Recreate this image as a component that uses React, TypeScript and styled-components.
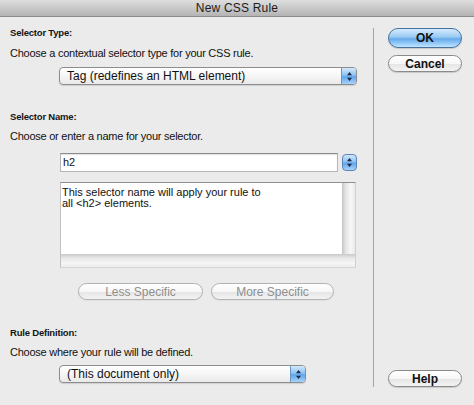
import React from "react";
import styled, { createGlobalStyle, css } from "styled-components";

const GlobalStyle = createGlobalStyle`
  html, body { margin: 0; padding: 0; background: #ebebeb; }
  * { box-sizing: border-box; }
  body { font-family: "Liberation Sans", Arial, sans-serif; color: #111; }
`;

const Window = styled.div`
  width: 474px;
  height: 405px;
  background: #ebebeb;
  display: flex;
  flex-direction: column;
  overflow: hidden;
`;

const TitleBar = styled.div`
  height: 17px;
  flex: none;
  display: flex;
  align-items: center;
  justify-content: center;
  background: linear-gradient(#dedede, #b4b4b4);
  border-bottom: 1px solid #8c8c8c;
  font-size: 12px;
  color: #1c1c1c;
  letter-spacing: 0.2px;
`;

const Body = styled.div`
  flex: 1;
  display: flex;
  min-height: 0;
`;

const LeftPane = styled.div`
  flex: 1;
  padding: 10px 0 0 10px;
  display: flex;
  flex-direction: column;
  align-items: flex-start;
`;

const Label = styled.div<{ $mt?: number }>`
  margin-top: ${(p) => p.$mt ?? 0}px;
  font-size: 9.5px;
  font-weight: bold;
  line-height: 12px;
  color: #151515;
  letter-spacing: -0.2px;
`;

const Hint = styled.div<{ $mt?: number }>`
  margin-top: ${(p) => p.$mt ?? 0}px;
  font-size: 11px;
  line-height: 14px;
  color: #111;
  letter-spacing: -0.25px;
`;

const Select = styled.div<{ $mt: number; $w: number }>`
  margin-top: ${(p) => p.$mt}px;
  margin-left: 49px;
  width: ${(p) => p.$w}px;
  height: 18px;
  border: 1px solid #8d8d8d;
  border-radius: 4px;
  background: linear-gradient(#ffffff, #f6f6f6 50%, #e9e9e9);
  box-shadow: 0 1px 1px rgba(0, 0, 0, 0.12);
  display: flex;
  align-items: center;
  overflow: hidden;
`;

const SelectText = styled.span`
  flex: 1;
  padding-left: 7px;
  font-size: 12px;
  color: #111;
`;

const aqua = css`
  background: linear-gradient(#d2e8fc, #8ec2f2 45%, #5ea5ea 55%, #a8d3fa);
`;

const SelectArrow = styled.div`
  width: 15px;
  height: 100%;
  ${aqua};
  border-left: 1px solid #6c94c4;
  display: flex;
  align-items: center;
  justify-content: center;
`;

const InputRow = styled.div`
  margin-top: 10px;
  margin-left: 50px;
  display: flex;
  align-items: center;
  gap: 4px;
`;

const TextInput = styled.div`
  width: 278px;
  height: 19px;
  background: #fff;
  border: 1px solid #b5b5b5;
  border-top-color: #8a8a8a;
  box-shadow: inset 0 1px 1px rgba(0, 0, 0, 0.12);
  font-size: 11px;
  line-height: 17px;
  padding-left: 2px;
  color: #111;
`;

const Stepper = styled.div`
  width: 15px;
  height: 17px;
  border-radius: 4px;
  border: 1px solid #5b84b8;
  ${aqua};
  display: flex;
  align-items: center;
  justify-content: center;
`;

const TextArea = styled.div`
  margin-top: 10px;
  margin-left: 50px;
  width: 296px;
  height: 86px;
  border-top: 1px solid #8f8f8f;
  border-left: 1px solid #c2c2c2;
  border-right: 1px solid #d0d0d0;
  border-bottom: 1px solid #d6d6d6;
  display: grid;
  grid-template-columns: 1fr 13px;
  grid-template-rows: 1fr 13px;
  background: #fff;
`;

const AreaContent = styled.div`
  padding: 4px 0 0 1px;
  font-size: 11px;
  line-height: 11px;
  color: #111;
  background: #fff;
`;

const VTrack = styled.div`
  background: linear-gradient(90deg, #c6c6c6, #e6e6e6 4px, #f7f7f7 9px, #e8e8e8);
`;

const HTrack = styled.div`
  grid-column: 1 / span 2;
  background: linear-gradient(#c9c9c9, #e8e8e8 4px, #f5f5f5 9px, #ededed);
`;

const ButtonRow = styled.div`
  margin-top: 15px;
  margin-left: 68px;
  display: flex;
  gap: 8px;
`;

const Pill = styled.div<{ $w: number; $h?: number; $disabled?: boolean; $primary?: boolean }>`
  width: ${(p) => p.$w}px;
  height: ${(p) => p.$h ?? 17}px;
  border-radius: 10px;
  display: flex;
  align-items: center;
  justify-content: center;
  font-size: 12px;
  border: 1px solid ${(p) => (p.$disabled ? "#b2b2b2" : p.$primary ? "#47729f" : "#8a8a8a")};
  color: ${(p) => (p.$disabled ? "#8f8f8f" : "#111")};
  font-weight: ${(p) => (p.$disabled ? "normal" : "bold")};
  background: ${(p) =>
    p.$primary
      ? "linear-gradient(#d6ebfd, #98c9f3 45%, #66aaea 55%, #9fd1fb 85%, #c4e4fd)"
      : "linear-gradient(#ffffff, #f7f7f7 50%, #e6e6e6 55%, #f3f3f3)"};
  box-shadow: 0 1px 1px rgba(0, 0, 0, ${(p) => (p.$disabled ? 0.05 : 0.15)});
`;

const RightPane = styled.div`
  width: 101px;
  flex: none;
  margin: 11px 0 18px;
  border-left: 1px solid #a4a4a4;
  padding-left: 14px;
  display: flex;
  flex-direction: column;
  gap: 7px;
`;

const Spacer = styled.div`
  flex: 1;
`;

const UpDown = () => (
  <svg width="7" height="11" viewBox="0 0 7 11">
    <path d="M3.5 1 L6 4.2 L1 4.2 Z" fill="#1d2a44" />
    <path d="M3.5 10 L6 6.8 L1 6.8 Z" fill="#1d2a44" />
  </svg>
);

export default function App() {
  return (
    <>
      <GlobalStyle />
      <Window>
        <TitleBar>New CSS Rule</TitleBar>
        <Body>
          <LeftPane>
            <Label>Selector Type:</Label>
            <Hint $mt={7}>Choose a contextual selector type for your CSS rule.</Hint>
            <Select $mt={7} $w={298}>
              <SelectText>Tag (redefines an HTML element)</SelectText>
              <SelectArrow>
                <UpDown />
              </SelectArrow>
            </Select>

            <Label $mt={26}>Selector Name:</Label>
            <Hint $mt={6}>Choose or enter a name for your selector.</Hint>
            <InputRow>
              <TextInput>h2</TextInput>
              <Stepper>
                <UpDown />
              </Stepper>
            </InputRow>
            <TextArea>
              <AreaContent>
                This selector name will apply your rule to
                <br />
                all &lt;h2&gt; elements.
              </AreaContent>
              <VTrack />
              <HTrack />
            </TextArea>
            <ButtonRow>
              <Pill $w={125} $disabled>
                Less Specific
              </Pill>
              <Pill $w={123} $disabled>
                More Specific
              </Pill>
            </ButtonRow>

            <Label $mt={27}>Rule Definition:</Label>
            <Hint $mt={6}>Choose where your rule will be defined.</Hint>
            <Select $mt={6} $w={247}>
              <SelectText>(This document only)</SelectText>
              <SelectArrow>
                <UpDown />
              </SelectArrow>
            </Select>
          </LeftPane>
          <RightPane>
            <Pill $w={74} $h={20} $primary>
              OK
            </Pill>
            <Pill $w={74}>Cancel</Pill>
            <Spacer />
            <Pill $w={74}>Help</Pill>
          </RightPane>
        </Body>
      </Window>
    </>
  );
}
